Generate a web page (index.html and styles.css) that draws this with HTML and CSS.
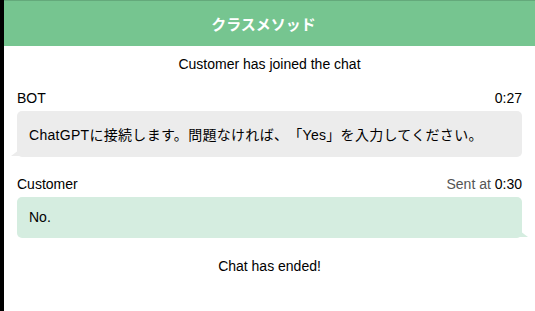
FILE: index.html
```html
<!DOCTYPE html>
<html lang="ja">
<head>
<meta charset="utf-8">
<title>クラスメソッド</title>
<link rel="stylesheet" href="styles.css">
</head>
<body>
<div class="app">
  <header class="header">クラスメソッド</header>
  <main class="chat">
    <div class="system">Customer has joined the chat</div>
    <div class="msg">
      <div class="meta"><span class="name">BOT</span><span class="time">0:27</span></div>
      <div class="bubble bot">ChatGPTに接続します。問題なければ、「Yes」を入力してください。</div>
    </div>
    <div class="msg">
      <div class="meta"><span class="name">Customer</span><span class="time"><span class="sent">Sent at</span> 0:30</span></div>
      <div class="bubble customer">No.</div>
    </div>
    <div class="system end">Chat has ended!</div>
  </main>
</div>
</body>
</html>
```

FILE: styles.css
```css
html, body {
  margin: 0;
  padding: 0;
  background: #fff;
}
body {
  font-family: "Liberation Sans", Arial, "Noto Sans CJK JP", sans-serif;
  font-size: 14px;
  color: #000;
  text-spacing-trim: space-all;
}
.app {
  border-left: 4px solid #000;
  min-height: 311px;
  box-sizing: border-box;
}
.header {
  height: 46px;
  box-sizing: border-box;
  background: #76c590;
  border-top: 1px solid #64a97b;
  color: #fff;
  font-weight: bold;
  font-size: 15px;
  display: flex;
  align-items: center;
  justify-content: center;
  padding-right: 12px;
}
.chat {
  padding: 10px 13px 0 13px;
  display: flex;
  flex-direction: column;
}
.system {
  text-align: center;
  line-height: 16px;
}
.msg {
  margin-top: 18px;
}
.msg + .msg {
  margin-top: 19px;
}
.meta {
  display: flex;
  justify-content: space-between;
  line-height: 16px;
  margin-bottom: 5px;
}
.sent {
  color: #555;
}
.bubble {
  position: relative;
  border-radius: 5px;
  padding: 12px 12px 13px;
  line-height: normal;
}
.bubble.bot {
  background: #ececec;
  padding-top: 13px;
  letter-spacing: 0.3px;
}
.bubble.customer {
  background: #d5ede0;
  padding: 12px 12px 13px;
}
.bubble.bot::before {
  content: "";
  position: absolute;
  left: -6px;
  bottom: 1px;
  border-style: solid;
  border-width: 0 0 6px 8px;
  border-color: transparent transparent #ececec transparent;
}
.bubble.customer::after {
  content: "";
  position: absolute;
  right: -6px;
  bottom: 1px;
  border-style: solid;
  border-width: 0 8px 6px 0;
  border-color: transparent transparent #d5ede0 transparent;
}
.system.end {
  margin-top: 20px;
}
```
